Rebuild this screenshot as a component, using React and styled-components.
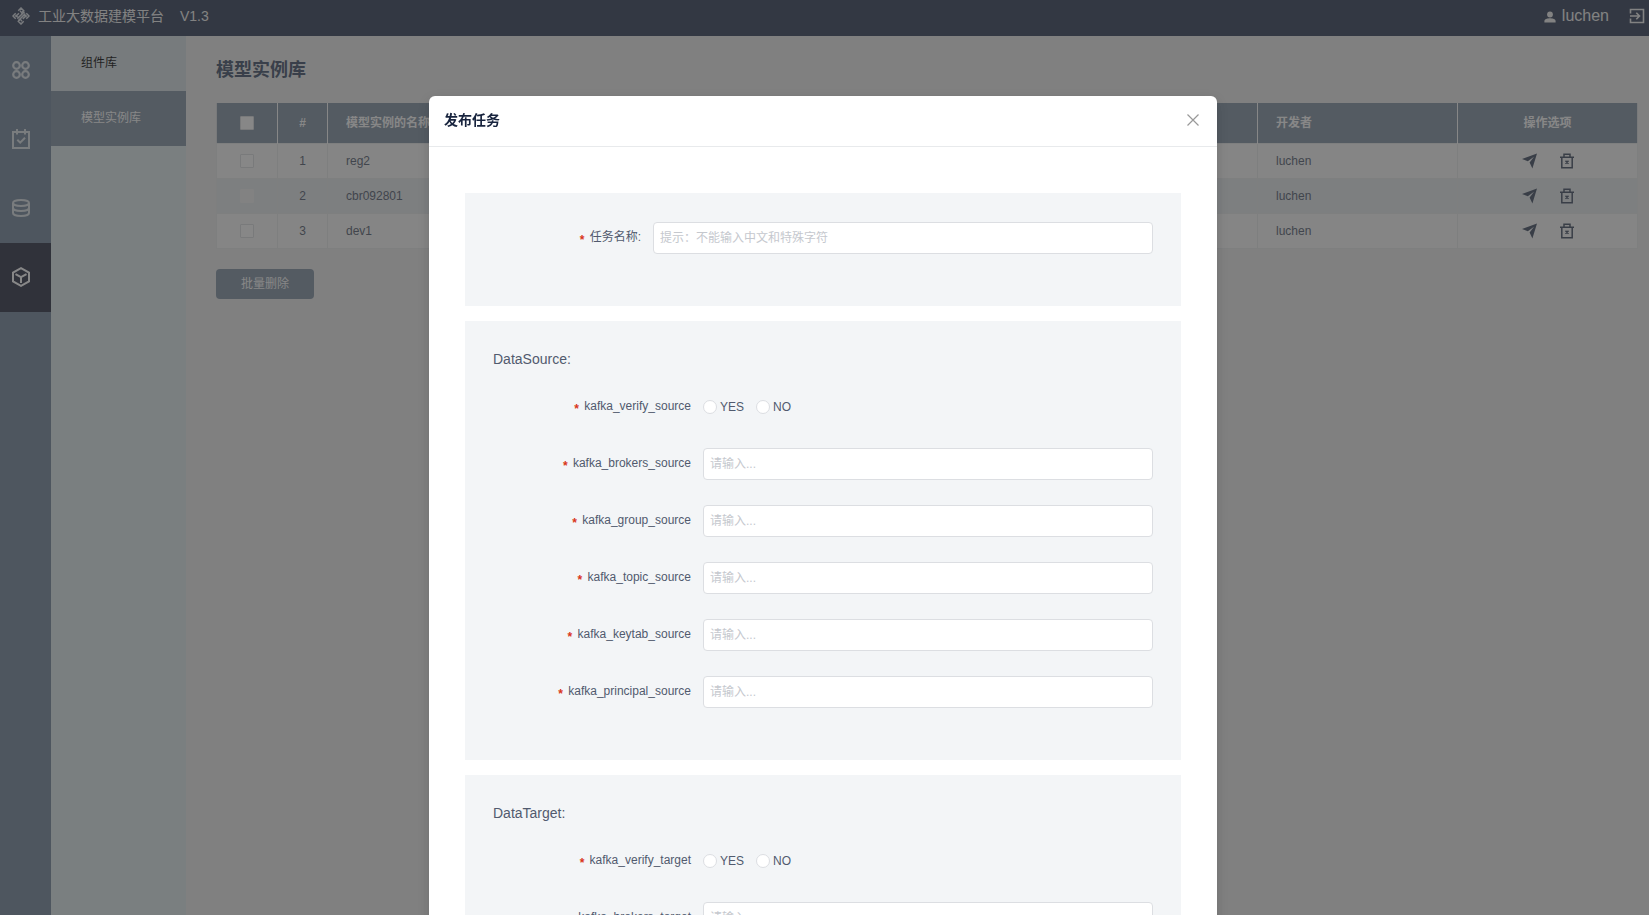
import React from "react";
import styled, { createGlobalStyle } from "styled-components";

const GlobalStyle = createGlobalStyle`
    * {
        box-sizing: border-box;
    }
    body {
        margin: 0;
        background: #eee;
        color: #515a6e;
        font-family: "Liberation Sans", "Noto Sans CJK SC", sans-serif;
        font-size: 12px;
        line-height: 18px;
    }
    button, input {
        font: inherit;
    }
`;

const Page = styled.div`
    display: flex;
    flex-direction: column;
    height: 100vh;
    overflow: hidden;
`;

const Header = styled.header`
    display: flex;
    align-items: center;
    justify-content: space-between;
    height: 36px;
    padding: 0 4px 4px 12px;
    background: #2d3a55;
    color: #f3f3f3;
    font-size: 14px;
`;

const Brand = styled.div`
    display: flex;
    align-items: center;
    gap: 8px;
`;

const Version = styled.span`
    margin-left: 8px;
`;

const User = styled.div`
    display: flex;
    align-items: center;
    gap: 6px;
    font-size: 16px;
`;

const IconButton = styled.button`
    display: flex;
    padding: 0;
    border: 0;
    background: none;
    color: inherit;
    cursor: pointer;
`;

const Logout = styled(IconButton)`
    margin-left: 14px;
`;

const Body = styled.div`
    display: flex;
    flex: 1;
    min-height: 0;
`;

const Rail = styled.nav`
    display: flex;
    flex-direction: column;
    width: 51px;
    background: #72869b;
`;

const RailLink = styled.a`
    display: flex;
    align-items: center;
    height: 69px;
    padding: 0 0 2px 12px;
    background: ${props => props.$active ? "#272b40" : "transparent"};
    color: ${props => props.$active ? "#fff" : "#dde3e8"};
`;

const SubMenu = styled.nav`
    width: 135px;
    background: #dfeaed;
`;

const SubLink = styled.a`
    display: block;
    height: 55px;
    padding-left: 30px;
    line-height: 54px;
    text-decoration: none;
    background: ${props => props.$active ? "#7f91a3" : "#d8e0e6"};
    color: ${props => props.$active ? "#fff" : "#000"};
`;

const Content = styled.main`
    flex: 1;
    min-width: 0;
    padding: 20px 11px 0 30px;
`;

const Heading = styled.h1`
    margin: 0 0 19px;
    color: #3d4d68;
    font-size: 18px;
    line-height: 28px;
`;

const Table = styled.table`
    width: 100%;
    table-layout: fixed;
    border-collapse: collapse;
    border: 1px solid #dcdee2;
    border-top: 0;
`;

const Th = styled.th`
    height: 40px;
    padding: 0 18px;
    border-left: 1px solid #fff;
    background: #7f91a3;
    color: #fff;
    text-align: ${props => props.$align || "left"};
    white-space: nowrap;
    overflow: hidden;

    &:first-child {
        border-left: 0;
    }
`;

const Td = styled.td`
    height: 35px;
    padding: 0 18px;
    border: 1px solid #e8eaec;
    text-align: ${props => props.$align || "left"};
`;

const Tr = styled.tr`
    background: ${props => props.$shaded ? "#e6ebee" : "#fafafa"};
`;

const Checkbox = styled.input`
    appearance: none;
    display: block;
    width: 14px;
    height: 14px;
    margin: 0 auto;
    border: 1px solid #dcdee2;
    border-radius: 1px;
    background: #fff;

    &:disabled {
        border-color: #f3f3f3;
        background: #f3f3f3;
    }
`;

const Actions = styled.div`
    display: flex;
    align-items: center;
    justify-content: center;
    gap: 23px;
    color: #3d4a60;
`;

const DeleteButton = styled.button`
    height: 30px;
    margin-top: 20px;
    padding: 0 25px;
    border: 0;
    border-radius: 4px;
    background: #7f91a3;
    color: #fff;
`;

const Mask = styled.div`
    position: fixed;
    inset: 0;
    display: flex;
    justify-content: center;
    align-items: flex-start;
    padding: 96px 3px 0 0;
    overflow: hidden;
    background: rgba(55, 55, 55, 0.6);
`;

const Modal = styled.section`
    width: 788px;
    max-width: 100%;
    border-radius: 6px;
    background: #fff;
    box-shadow: 0 4px 12px rgba(0, 0, 0, 0.15);
`;

const ModalHeader = styled.div`
    display: flex;
    align-items: center;
    justify-content: space-between;
    height: 51px;
    padding: 0 18px 2px 15px;
    border-bottom: 1px solid #e8eaec;
`;

const ModalTitle = styled.h2`
    margin: 0;
    color: #17233d;
    font-size: 14px;
    line-height: 20px;
`;

const Form = styled.form`
    display: flex;
    flex-direction: column;
    gap: 15px;
    padding: 46px 36px;
`;

const Group = styled.fieldset`
    min-width: 0;
    margin: 0;
    padding: 29px 28px 27px;
    border: 0;
    background: #f3f5f7;
`;

const GroupTitle = styled.h3`
    margin: 0 0 23px;
    font-size: 14px;
    font-weight: normal;
    line-height: 18px;
`;

const Field = styled.div`
    display: grid;
    grid-template-columns: ${props => props.$labelWidth}px 1fr;
    height: 32px;
    margin-bottom: 25px;
`;

const Label = styled.label`
    padding-right: 12px;
    line-height: 30px;
    text-align: right;
`;

const Star = styled.span`
    display: inline-block;
    margin-right: 4px;
    color: #d9361a;
    font-family: "Liberation Mono", monospace;
    font-size: 12px;
    font-weight: bold;
    line-height: 12px;
    vertical-align: sub;
`;

const TextInput = styled.input`
    width: 100%;
    height: 32px;
    padding: 0 6px;
    border: 1px solid #dcdee2;
    border-radius: 4px;
    background: #fff;
    color: #515a6e;

    &::placeholder {
        color: #c5c8ce;
    }
`;

const Radios = styled.div`
    display: flex;
    align-items: center;
    gap: 12px;
`;

const RadioLabel = styled.label`
    display: flex;
    align-items: center;
    gap: 3px;
`;

const Radio = styled.input`
    appearance: none;
    width: 14px;
    height: 14px;
    margin: 0;
    border: 1px solid #dcdee2;
    border-radius: 50%;
    background: #fff;

    &:checked {
        border: 4px solid #2d8cf0;
    }
`;

const Logo = () => (
    <svg width="18" height="18" viewBox="0 0 18 18" fill="none" stroke="#dde1e8" strokeWidth="1.5">
        <path d="M6.300 3.700 9 1l2.700 2.700L9 6.400M3.700 6.300 1 9l2.700 2.700M14.300 6.300 17 9l-2.700 2.700M11.700 14.300 9 17l-2.700-2.700L9 11.600" />
        <path d="M8 3.800 9.200 5M3.500 9.800 7 6.300M5.300 11.600 12.500 4.800M6.500 13.500 13.300 6.600M10.800 11.900 14.500 8.300M3.500 8l2 2M12.500 8l2 2M8.800 13l1.200 1.200" />
    </svg>
);

const PersonIcon = () => (
    <svg width="12" height="14" viewBox="0 0 12 14" fill="currentColor">
        <circle cx="6" cy="5.500" r="2.900" />
        <path d="M.4 13.500V12C.4 10 3.500 9.200 6 9.200s5.600.8 5.600 2.800v1.500z" />
    </svg>
);

const ExitIcon = () => (
    <svg width="16" height="16" viewBox="0 0 16 16" fill="none" stroke="currentColor" strokeWidth="1.600">
        <path d="M1.500 5.500V1.500h13v13h-13v-4M1 8h9.500M7.300 4.800 10.500 8l-3.200 3.200" />
    </svg>
);

const GridIcon = () => (
    <svg width="18" height="18" viewBox="0 0 18 18" fill="none" stroke="currentColor" strokeWidth="2.200">
        <circle cx="4.500" cy="4.500" r="3.300" />
        <circle cx="13.500" cy="4.500" r="3.300" />
        <circle cx="4.500" cy="13.500" r="3.300" />
        <circle cx="13.500" cy="13.500" r="3.300" />
    </svg>
);

const TaskIcon = () => (
    <svg width="18" height="20" viewBox="0 0 18 20" fill="none" stroke="currentColor" strokeWidth="2">
        <path d="M1 3h16v16H1zM5 0v5.500M13 0v5.500M5.300 10.800l2.900 2.900 4.800-4.900" />
    </svg>
);

const DataIcon = () => (
    <svg width="18" height="18" viewBox="0 0 18 18" fill="none" stroke="currentColor" strokeWidth="2">
        <ellipse cx="9" cy="4" rx="8" ry="3" />
        <path d="M1 4v10c0 1.700 3.600 3 8 3s8-1.300 8-3V4M1 9c0 1.700 3.600 3 8 3s8-1.300 8-3" />
    </svg>
);

const CubeIcon = () => (
    <svg width="18" height="20" viewBox="0 0 18 20" fill="none" stroke="currentColor" strokeWidth="2">
        <path d="M9 1.200 17 5.600v8.800L9 18.800 1 14.400V5.600zM3.500 7.200 9 10.200l5.500-3M9 10v6" />
    </svg>
);

const SendIcon = () => (
    <svg width="15" height="16" viewBox="0 0 15 16" fill="currentColor">
        <path d="M15 .5 0 6l5.800 2.200L12 3.800 7.600 9.600l2.800 5.900z" />
    </svg>
);

const TrashIcon = () => (
    <svg width="14" height="16" viewBox="0 0 14 16" fill="none" stroke="currentColor" strokeWidth="1.500">
        <path d="M0 4.200h14M1.800 4.500v10.300h10.400V4.500M4 4V1.200h6V4M5.500 7.800l3 3M8.500 7.800l-3 3" />
    </svg>
);

const CloseIcon = () => (
    <svg width="12" height="12" viewBox="0 0 12 12" fill="none" stroke="#999" strokeWidth="1.200">
        <path d="M.5.5l11 11M11.500.5l-11 11" />
    </svg>
);

const rail = [
    { name: "组件", icon: GridIcon },
    { name: "任务", icon: TaskIcon },
    { name: "数据", icon: DataIcon },
    { name: "模型", icon: CubeIcon, active: true }
];

const models = [
    { id: 1, name: "reg2", developer: "luchen" },
    { id: 2, name: "cbr092801", developer: "luchen", disabled: true },
    { id: 3, name: "dev1", developer: "luchen" }
];

const kafkaFields = ["brokers", "group", "topic", "keytab", "principal"];

const KafkaGroup = ({ title, suffix }) => (
    <Group>
        <GroupTitle>{title}:</GroupTitle>
        <Field $labelWidth={210}>
            <Label as="span" id={`verify_${suffix}`}><Star>*</Star>kafka_verify_{suffix}</Label>
            <Radios role="radiogroup" aria-labelledby={`verify_${suffix}`}>
                <RadioLabel><Radio type="radio" name={`verify_${suffix}`} />YES</RadioLabel>
                <RadioLabel><Radio type="radio" name={`verify_${suffix}`} />NO</RadioLabel>
            </Radios>
        </Field>
        {kafkaFields.map(field => (<Field key={field} $labelWidth={210}>
            <Label htmlFor={`${field}_${suffix}`}><Star>*</Star>kafka_{field}_{suffix}</Label>
            <TextInput id={`${field}_${suffix}`} placeholder="请输入..." />
        </Field>))}
    </Group>
);

const PublishModal = () => (
    <Mask>
        <Modal role="dialog" aria-labelledby="modal-title">
            <ModalHeader>
                <ModalTitle id="modal-title">发布任务</ModalTitle>
                <IconButton type="button" aria-label="关闭"><CloseIcon /></IconButton>
            </ModalHeader>
            <Form>
                <Group>
                    <Field $labelWidth={160}>
                        <Label htmlFor="task-name"><Star>*</Star>任务名称:</Label>
                        <TextInput id="task-name" placeholder="提示：不能输入中文和特殊字符" />
                    </Field>
                </Group>
                <KafkaGroup title="DataSource" suffix="source" />
                <KafkaGroup title="DataTarget" suffix="target" />
            </Form>
        </Modal>
    </Mask>
);

const CheckCol = styled.col`
    width: 61px;
`;

const IndexCol = styled.col`
    width: 50px;
`;

const DeveloperCol = styled.col`
    width: 200px;
`;

const ActionsCol = styled.col`
    width: 180px;
`;

const ModelTable = () => (
    <Table>
        <colgroup>
            <CheckCol />
            <IndexCol />
            <col />
            <DeveloperCol />
            <ActionsCol />
        </colgroup>
        <thead>
            <tr>
                <Th $align="center"><Checkbox type="checkbox" aria-label="全选" /></Th>
                <Th $align="center">#</Th>
                <Th>模型实例的名称</Th>
                <Th>开发者</Th>
                <Th $align="center">操作选项</Th>
            </tr>
        </thead>
        <tbody>
            {models.map(model => (<Tr key={model.id} $shaded={model.disabled}>
                <Td><Checkbox type="checkbox" aria-label={model.name} disabled={model.disabled} /></Td>
                <Td $align="center">{model.id}</Td>
                <Td>{model.name}</Td>
                <Td>{model.developer}</Td>
                <Td>
                    <Actions>
                        <IconButton aria-label="发布"><SendIcon /></IconButton>
                        <IconButton aria-label="删除"><TrashIcon /></IconButton>
                    </Actions>
                </Td>
            </Tr>))}
        </tbody>
    </Table>
);

const App = () => (
    <Page>
        <GlobalStyle />
        <Header>
            <Brand>
                <Logo />
                <span>工业大数据建模平台</span>
                <Version>V1.3</Version>
            </Brand>
            <User>
                <PersonIcon />
                <span>luchen</span>
                <Logout aria-label="退出"><ExitIcon /></Logout>
            </User>
        </Header>
        <Body>
            <Rail>
                {rail.map(({ name, icon: Icon, active }) => (
                    <RailLink key={name} href="#" aria-label={name} $active={active}><Icon /></RailLink>
                ))}
            </Rail>
            <SubMenu>
                <SubLink href="#">组件库</SubLink>
                <SubLink href="#" $active>模型实例库</SubLink>
            </SubMenu>
            <Content>
                <Heading>模型实例库</Heading>
                <ModelTable />
                <DeleteButton>批量删除</DeleteButton>
            </Content>
        </Body>
        <PublishModal />
    </Page>
);

export default App;
